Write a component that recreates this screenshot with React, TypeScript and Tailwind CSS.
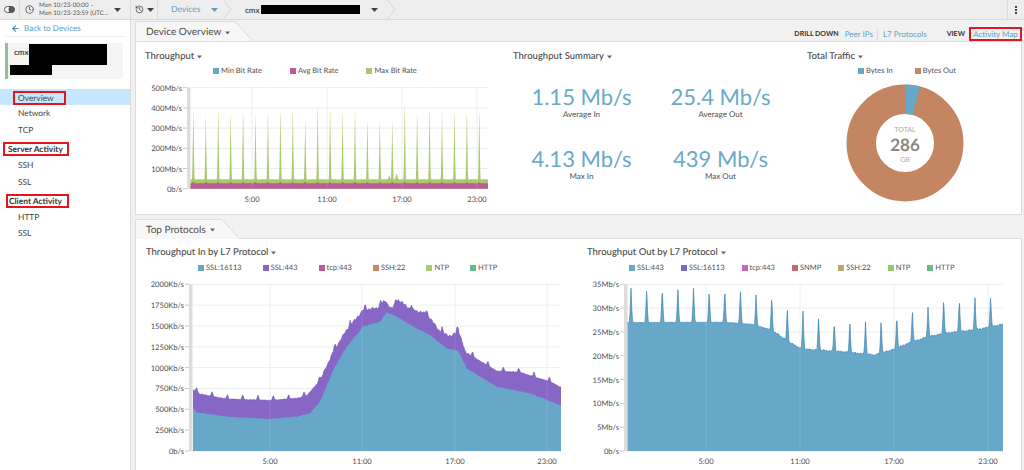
import { Clock, History, ArrowLeft } from "lucide-react";
import type { ReactNode } from "react";

type P = [number, number];

function interp(keys: P[], x: number) {
  if (x <= keys[0][0]) return keys[0][1];
  for (let i = 1; i < keys.length; i++) {
    if (x <= keys[i][0]) {
      const [a, b] = keys[i - 1];
      const [c, d] = keys[i];
      return b + ((d - b) * (x - a)) / (c - a);
    }
  }
  return keys[keys.length - 1][1];
}
const noise = (x: number) => Math.sin(x * 1.7) * 0.5 + Math.sin(x * 4.3 + 1) * 0.35 + Math.sin(x * 0.63 + 2) * 0.35;

function areaPath(fn: (x: number) => number, x0: number, x1: number, baseY: number, step = 0.5) {
  let d = `M${x0} ${baseY}`;
  for (let x = x0; x <= x1; x += step) d += `L${x} ${fn(x).toFixed(2)}`;
  return `${d}L${x1} ${baseY}Z`;
}
function linePath(fn: (x: number) => number, x0: number, x1: number, step = 0.5) {
  let d = "";
  for (let x = x0; x <= x1; x += step) d += `${d ? "L" : "M"}${x} ${fn(x).toFixed(2)}`;
  return d;
}

const inTop: P[] = [[190,525],[210,537],[290,552],[420,556],[500,550],[530,542],[570,497],[610,410],[650,345],[700,285],[740,280],[765,258],[785,282],[805,255],[840,282],[890,297],[930,350],[965,365],[985,345],[1005,410],[1050,438],[1100,468],[1170,472],[1220,488],[1260,500],[1295,518]];
const inBlue: P[] = [[190,580],[200,592],[290,605],[420,612],[500,605],[540,595],[570,560],[610,465],[650,395],[700,335],[750,320],[770,292],[800,305],[850,335],[900,360],[950,400],[985,408],[1010,460],[1100,515],[1200,535],[1295,572]];
const inSpike = (zx: number) => {
  const dx = Math.abs(((zx - 200 + 23 + 4600) % 46) - 23);
  return dx < 5 ? 14 * (1 - dx / 5) : 0;
};
const inTopFn = (x: number) => {
  const zx = (x - 130) * 3;
  const amp = zx > 570 && zx < 1020 ? 1.6 : 0.3;
  return 215 + (interp(inTop, zx) - inSpike(zx)) / 3 + noise(x) * amp;
};
const inBlueFn = (x: number) => {
  const zx = (x - 130) * 3;
  return 215 + interp(inBlue, zx) / 3 + noise(x) * 0.4;
};

const outBase: P[] = [[147,263],[300,262],[450,262],[530,268],[590,285],[640,320],[680,342],[800,350],[900,360],[960,342],[1000,325],[1060,305],[1110,295],[1150,290],[1200,285],[1283,268]];
const outTops = [160,156,154,155,157,163,159,165,175,178,213,225,243,255,255,258,252,235,224,213,188,188,183,183];
const outFn = (x: number) => {
  const zx = (x - 575) * 3;
  const base = interp(outBase, zx);
  let y = base;
  const i = Math.round((zx - 168) / 46.9);
  if (i >= 0 && i < outTops.length) {
    const dx = Math.abs(zx - (168 + 46.9 * i));
    if (dx < 5.5) y = base + (outTops[i] - base) * Math.pow(1 - dx / 5.5, 1.6);
  }
  const amp = zx > 590 ? 0.9 : 0.25;
  return 235 + y / 3 + noise(x * 1.3) * amp;
};

const tpTops = [132,158,128,140,131,155,138,132,132,172,117,118,143,133,162,165,170,118,138,123,143,135,133,135];
const greenFn = (x: number) => {
  const zx = (x - 140) * 3;
  let y = 358 + noise(x) * 0.5;
  const i = Math.round((zx - 160) / 37.3);
  if (i >= 0 && i < tpTops.length) {
    const dx = Math.abs(zx - (160 + 37.3 * i));
    if (dx < 4) y = 358 + (tpTops[i] - 358) * Math.pow(1 - dx / 4, 1.5);
  }
  const b1 = Math.abs(zx - 748);
  if (b1 < 4) y = Math.min(y, 345 + b1 * 3);
  const b2 = Math.abs(zx - 770);
  if (b2 < 5) y = Math.min(y, 340 + b2 * 3.5);
  return 60 + y / 3;
};
const magentaFn = (x: number) => {
  const zx = (x - 140) * 3;
  const i = Math.round((zx - 160) / 37.3);
  const dx = Math.abs(zx - (160 + 37.3 * i));
  return 183.3 - (dx < 3 ? 1 : 0);
};

function Caret({ className = "" }: { className?: string }) {
  return (
    <svg width="7" height="4" viewBox="0 0 7 4" className={className}>
      <path d="M0 0H7L3.5 4Z" fill="currentColor" />
    </svg>
  );
}

function Crumb() {
  return (
    <svg width="9" height="19" viewBox="0 0 9 19" className="shrink-0">
      <path d="M0.5 0L8 9.5L0.5 19" fill="none" stroke="#d6d6d6" />
    </svg>
  );
}

function Tab({ label, w, h, pt }: { label: string; w: string; h: string; pt: string }) {
  return (
    <div className={`flex ${h}`}>
      <div className={`${w} ${pt} bg-[#f7f7f7] border-l border-t border-[#dcdcdc] pl-[10px] flex items-center gap-[4px] text-[10px] text-[#4a4a4a] rounded-tl-[2px] whitespace-nowrap`}>
        <span>{label}</span>
        <Caret className="w-[5px] text-[#666]" />
      </div>
      <svg width="18" height="20" viewBox="0 0 18 20" className="shrink-0">
        <path d="M0 0.5L17.5 20H0Z" fill="#f7f7f7" />
        <path d="M0 0.5L17.5 20" stroke="#dcdcdc" fill="none" />
      </svg>
    </div>
  );
}

function Title({ children }: { children: ReactNode }) {
  return (
    <div className="h-[14px] flex items-center gap-[3px] text-[9.5px] leading-[14px] text-[#4a4a4a] font-medium whitespace-nowrap">
      <span>{children}</span>
      <Caret className="w-[5px] text-[#666]" />
    </div>
  );
}

function Legend({ items, gap, pl }: { items: [string, string][]; gap: string; pl: string }) {
  return (
    <div className={`flex h-[12px] items-center ${gap} ${pl} text-[7.5px] leading-[12px] text-[#4f4f4f] whitespace-nowrap`}>
      {items.map(([c, t]) => (
        <div key={t} className="flex items-center gap-[2px]">
          <span className="w-[6px] h-[6px] block" style={{ background: c }} />
          <span>{t}</span>
        </div>
      ))}
    </div>
  );
}

function Axes({ yLabels, yTop, yBottom, xLabels, plotL, plotR, labelX, xLabelY, children }: {
  yLabels: string[]; yTop: number; yBottom: number; xLabels: [string, number][]; plotL: number; plotR: number; labelX: number; xLabelY: number; children: ReactNode;
}) {
  const n = yLabels.length - 1;
  return (
    <>
      {yLabels.map((l, i) => {
        const y = yTop + ((yBottom - yTop) * i) / n;
        return (
          <g key={l}>
            <line x1={plotL} x2={plotR} y1={y} y2={y} stroke="#eeeeee" strokeWidth="1" />
            <line x1={labelX + 1} x2={plotL} y1={y} y2={y} stroke="#c8c8c8" strokeWidth="1" />
            <text x={labelX} y={y + 3} textAnchor="end" className="text-[7.6px] fill-[#4f4f4f]">{l}</text>
          </g>
        );
      })}
      {xLabels.map(([l, x]) => (
        <line key={l} x1={x} x2={x} y1={yTop} y2={yBottom} stroke="#eeeeee" strokeWidth="1" />
      ))}
      <rect x={plotL} y={yTop} width="3.5" height={yBottom - yTop} fill="#dddddd" />
      {children}
      {xLabels.map(([l, x]) => (
        <g key={l}>
          <line x1={x} x2={x} y1={yTop} y2={yBottom} stroke="#ffffff" strokeOpacity="0.13" strokeWidth="1" />
          <text x={x} y={xLabelY} textAnchor="middle" className="text-[7.6px] fill-[#4f4f4f]">{l}</text>
        </g>
      ))}
    </>
  );
}

function Metric({ value, label, h }: { value: string; label: string; h: string }) {
  return (
    <div className={`flex flex-col items-center ${h} whitespace-nowrap`}>
      <div className="text-[22px] h-[24px] leading-[24px] text-[#6aa9c9]">{value}</div>
      <div className="text-[8px] leading-[10px] text-[#4f4f4f]">{label}</div>
    </div>
  );
}

function NavRow({ children, className = "" }: { children: ReactNode; className?: string }) {
  return <div className={`h-[16px] flex items-center text-[8.4px] text-[#444] whitespace-nowrap ${className}`}>{children}</div>;
}

const donutSlice = (() => {
  const a = (15 * Math.PI) / 180;
  const R = 58.5;
  const r = 29;
  const cx = 59;
  const cy = 59;
  return `M${cx} ${cy - R}A${R} ${R} 0 0 1 ${cx + R * Math.sin(a)} ${cy - R * Math.cos(a)}L${cx + r * Math.sin(a)} ${cy - r * Math.cos(a)}A${r} ${r} 0 0 0 ${cx} ${cy - r}Z`;
})();

export default function App() {
  return (
    <div className="w-[1024px] h-[470px] overflow-hidden flex flex-col bg-[#f1f1f1] font-[family-name:Lato,sans-serif] text-[#444] [text-rendering:geometricPrecision]">
      {/* top bar */}
      <header className="h-[20px] shrink-0 flex items-stretch bg-[#eeeeee] border-b border-[#d9d9d9]">
        <div className="w-[20px] flex items-center justify-center border-r border-[#dcdcdc]">
          <svg width="11" height="7" viewBox="0 0 11 7">
            <rect x="0.5" y="0.5" width="10" height="6" rx="3" fill="#fff" stroke="#555" />
            <circle cx="7.5" cy="3.5" r="3" fill="#555" />
          </svg>
        </div>
        <div className="w-[111px] flex items-center border-r border-[#dcdcdc]">
          <Clock size={9} strokeWidth={2} className="ml-[5px] text-[#444]" />
          <div className="ml-[5px] w-[71px] text-[6.2px] leading-[7.5px] text-[#555] whitespace-nowrap">
            <div>Mon 10/23-00:00 –</div>
            <div>Mon 10/23-23:59 (UTC...</div>
          </div>
          <Caret className="ml-[4px] text-[#444]" />
        </div>
        <div className="w-[27px] flex items-center border-r border-[#dcdcdc] pl-[4px]">
          <History size={9} strokeWidth={2} className="text-[#444]" />
          <Caret className="ml-[3px] text-[#444]" />
        </div>
        <div className="w-[65px] flex items-center pl-[13px] text-[8.5px] text-[#5b9fc8]">
          <span>Devices</span>
          <Caret className="ml-[11px] text-[#5b9fc8]" />
        </div>
        <Crumb />
        <div className="w-[155px] flex items-center pl-[13px] text-[8px] font-bold text-[#555]">
          <span>cmx</span>
          <span className="ml-[1px] w-[99px] h-[9px] bg-black" />
          <Caret className="ml-[11px] text-[#444]" />
        </div>
        <Crumb />
        <div className="ml-auto w-[17px] flex items-center justify-center border-l border-[#dcdcdc] text-[#444]">
          <svg width="2" height="8" viewBox="0 0 2 8">
            <rect width="2" height="2" fill="currentColor" />
            <rect y="3" width="2" height="2" fill="currentColor" />
            <rect y="6" width="2" height="2" fill="currentColor" />
          </svg>
        </div>
      </header>

      <div className="flex flex-1 min-h-0">
        {/* sidebar */}
        <aside className="w-[131px] shrink-0 bg-white border-r border-[#dcdcdc]">
          <div className="h-[16px] mx-[5px] flex items-center text-[8.1px] text-[#5b9fc8] pl-[6px] gap-[4px] whitespace-nowrap">
            <ArrowLeft size={9} strokeWidth={3.2} className="text-[#4a90c2]" />
            <span>Back to Devices</span>
          </div>
          <div className="mx-[5px] h-px bg-[#efefef]" />
          <div className="relative mx-[5px] mt-[6px] h-[36px] w-[118px] bg-[#f5f5f5] border-l-[3px] border-[#8fc0a0] pl-[6px] pt-[3px] text-[8px] font-bold text-[#444] leading-[12px]">
            cmx
            <span className="absolute left-[21px] top-[1px] w-[78px] h-[21px] bg-black" />
            <span className="absolute left-[2px] top-[22px] w-[42px] h-[10px] bg-black" />
          </div>
          <div className="mt-[10px]">
            <NavRow className="bg-[#c5e6fb] pl-[13px]">
              <span className="w-[53px] h-[14px] mt-[2px] border-2 border-[#e5141d] flex items-center pl-[3px]">Overview</span>
            </NavRow>
            <NavRow className="pl-[18px]">Network</NavRow>
            <NavRow className="pl-[18px] mt-[1px]">TCP</NavRow>
            <NavRow className="pl-[3px] mt-[3px]">
              <span className="w-[66px] h-[14px] border-2 border-[#e5141d] flex items-center pl-[3px] font-bold text-[#333]">Server Activity</span>
            </NavRow>
            <NavRow className="pl-[18px]">SSH</NavRow>
            <NavRow className="pl-[18px] mt-[1px]">SSL</NavRow>
            <NavRow className="pl-[6px] mt-[3px]">
              <span className="w-[63px] h-[14px] border-2 border-[#e5141d] flex items-center pl-[1px] font-bold text-[#333]">Client Activity</span>
            </NavRow>
            <NavRow className="pl-[18px]">HTTP</NavRow>
            <NavRow className="pl-[18px]">SSL</NavRow>
          </div>
        </aside>

        {/* main */}
        <main className="flex-1 min-w-0 pl-[4px] pr-[2px] pt-[2px]">
          <div className="flex items-end h-[19px]">
            <Tab label="Device Overview" w="w-[100px]" h="h-[20px]" pt="pt-[2px]" />
            <div className="ml-auto flex items-center h-[14px] text-[8px] text-[#5b9fc8] whitespace-nowrap">
              <span className="text-[7px] font-bold text-[#333]">DRILL DOWN</span>
              <span className="ml-[6px]">Peer IPs</span>
              <span className="ml-[4px] mr-[5px] w-px h-[11px] bg-[#d8d8d8]" />
              <span>L7 Protocols</span>
              <span className="ml-[20px] text-[7px] font-bold text-[#333]">VIEW</span>
              <span className="ml-[4px] w-[53px] h-[14px] border-2 border-[#e5141d] flex items-center justify-center">Activity Map</span>
            </div>
          </div>

          {/* Device overview panel */}
          <section className="h-[174px] bg-white border border-[#dcdcdc] flex">
            <div className="w-[367px] shrink-0 pl-[9px] pt-[8px]">
              <Title>Throughput</Title>
              <div className="mt-[1px]">
                <Legend pl="pl-[68px]" gap="gap-[28px]" items={[["#67a8c8", "Min Bit Rate"], ["#bc5c96", "Avg Bit Rate"], ["#a9c96a", "Max Bit Rate"]]} />
              </div>
              <svg width="350" height="130" viewBox="145 80 350 130" className="mt-[3px]">
                <Axes
                  yLabels={["500Mb/s", "400Mb/s", "300Mb/s", "200Mb/s", "100Mb/s", "0b/s"]}
                  yTop={87.7}
                  yBottom={188.7}
                  xLabels={[["5:00", 252], ["11:00", 327], ["17:00", 402], ["23:00", 477]]}
                  plotL={187}
                  plotR={488}
                  labelX={182}
                  xLabelY={202}
                >
                  <path d={areaPath(greenFn, 190.5, 488, 188.7, 0.25)} fill="#a9c96a" />
                  <path d={areaPath(magentaFn, 190.5, 488, 188.7, 0.25)} fill="#bc5c96" />
                </Axes>
              </svg>
            </div>
            <div className="w-[294px] shrink-0 pt-[8px]">
              <div className="pl-[10px]">
                <Title>Throughput Summary</Title>
              </div>
              <div className="ml-[9px] mt-[21px] w-[278px] grid grid-cols-2">
                <Metric h="h-[62px]" value="1.15 Mb/s" label="Average In" />
                <Metric h="h-[62px]" value="25.4 Mb/s" label="Average Out" />
                <Metric h="h-[36px]" value="4.13 Mb/s" label="Max In" />
                <Metric h="h-[36px]" value="439 Mb/s" label="Max Out" />
              </div>
            </div>
            <div className="flex-1 pl-[10px] pt-[8px]">
              <Title>Total Traffic</Title>
              <div className="mt-[1px]">
                <Legend pl="pl-[51px]" gap="gap-[22px]" items={[["#67a8c8", "Bytes In"], ["#c48562", "Bytes Out"]]} />
              </div>
              <div className="relative ml-[39px] mt-[7px] w-[118px] h-[118px]">
                <svg width="118" height="118" viewBox="0 0 118 118">
                  <circle cx="59" cy="59" r="43.75" fill="none" stroke="#c48562" strokeWidth="29.5" />
                  <path d={donutSlice} fill="#67a8c8" />
                </svg>
                <div className="absolute inset-0 pt-[3px] flex flex-col items-center justify-center text-[#aaaaaa]">
                  <span className="text-[7px] leading-[10px]">TOTAL</span>
                  <span className="text-[17px] leading-[20px] font-bold text-[#888]">286</span>
                  <span className="text-[7px] leading-[10px]">GB</span>
                </div>
              </div>
            </div>
          </section>

          {/* Top protocols */}
          <div className="mt-[4px]">
            <Tab label="Top Protocols" w="w-[87px]" h="h-[20px]" pt="pt-[1px]" />
          </div>
          <section className="h-[240px] -mt-px bg-white border border-[#dcdcdc] flex">
            <div className="w-[441px] shrink-0 pl-[10px] pt-[7px]">
              <Title>Throughput In by L7 Protocol</Title>
              <div className="mt-[2px]">
                <Legend pl="pl-[52px]" gap="gap-[21px]" items={[["#67a8c8", "SSL:16113"], ["#8866c6", "SSL:443"], ["#bc5c96", "tcp:443"], ["#c98766", "SSH:22"], ["#a9c96a", "NTP"], ["#66bb88", "HTTP"]]} />
              </div>
              <svg width="424" height="192" viewBox="146 278 424 192" className="mt-[4px]">
                <Axes
                  yLabels={["2000Kb/s", "1750Kb/s", "1500Kb/s", "1250Kb/s", "1000Kb/s", "750Kb/s", "500Kb/s", "250Kb/s", "0b/s"]}
                  yTop={284.3}
                  yBottom={451}
                  xLabels={[["5:00", 270], ["11:00", 362], ["17:00", 455], ["23:00", 547]]}
                  plotL={189}
                  plotR={561}
                  labelX={184}
                  xLabelY={464}
                >
                  <path d={areaPath(inTopFn, 193, 561, 451)} fill="#8866c6" />
                  <path d={linePath(inTopFn, 193, 561)} fill="none" stroke="#7448b8" strokeWidth="0.6" />
                  <path d={areaPath(inBlueFn, 193, 561, 451)} fill="#67a8c8" />
                </Axes>
              </svg>
            </div>
            <div className="flex-1 pl-[10px] pt-[7px]">
              <Title>Throughput Out by L7 Protocol</Title>
              <div className="mt-[2px]">
                <Legend pl="pl-[42px]" gap="gap-[17px]" items={[["#67a8c8", "SSL:443"], ["#7f66cc", "SSL:16113"], ["#c866c0", "tcp:443"], ["#c96a6a", "SNMP"], ["#bba96a", "SSH:22"], ["#90c86a", "NTP"], ["#66bb88", "HTTP"]]} />
              </div>
              <svg width="424" height="192" viewBox="587 278 424 192" className="mt-[4px]">
                <Axes
                  yLabels={["35Mb/s", "30Mb/s", "25Mb/s", "20Mb/s", "15Mb/s", "10Mb/s", "5Mb/s", "0b/s"]}
                  yTop={284.3}
                  yBottom={451}
                  xLabels={[["5:00", 706], ["11:00", 800], ["17:00", 894], ["23:00", 988]]}
                  plotL={624}
                  plotR={1003}
                  labelX={619}
                  xLabelY={464}
                >
                  <path d={areaPath(outFn, 627.5, 1003, 451)} fill="#67a8c8" />
                  <path d={linePath(outFn, 627.5, 1003)} fill="none" stroke="#3f83b3" strokeWidth="0.7" />
                </Axes>
              </svg>
            </div>
          </section>
        </main>
      </div>
    </div>
  );
}
